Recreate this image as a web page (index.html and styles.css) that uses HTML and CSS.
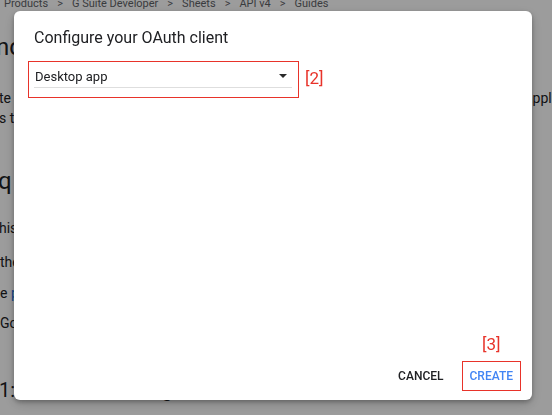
FILE: index.html
```html
<!DOCTYPE html>
<html lang="en">
<head>
<meta charset="utf-8">
<title>Configure your OAuth client</title>
<link rel="stylesheet" href="styles.css">
</head>
<body>
<div class="page">
  <nav class="crumbs">
    <span>Products</span><span class="sep">&gt;</span>
    <span>G Suite Developer</span><span class="sep">&gt;</span>
    <span>Sheets</span><span class="sep">&gt;</span>
    <span>API v4</span><span class="sep">&gt;</span>
    <span>Guides</span>
  </nav>
  <h1 class="h-title">nc</h1>
  <div class="p-row r-first"><span class="p-left">te t</span><span class="p-right">application</span></div>
  <div class="p-row"><span class="p-left">s to</span></div>
  <h2 class="h-sec">q</h2>
  <p class="p r-his">his</p>
  <p class="p r-th">the</p>
  <p class="p r-ep">e <a class="link">p</a></p>
  <p class="p r-go">Go</p>
  <h3 class="h-step">1: Turn on the Google Sheets API</h3>
</div>
<div class="scrim"></div>

<div class="dialog" role="dialog">
  <h2 class="d-title">Configure your OAuth client</h2>
  <div class="field-row">
    <div class="mark mark-field">
      <div class="select">
        <span class="select-value">Desktop app</span>
        <span class="select-arrow"></span>
      </div>
    </div>
    <span class="mark-label label-2">[2]</span>
  </div>
  <div class="actions">
    <button class="btn btn-cancel">CANCEL</button>
    <div class="create-col">
      <span class="mark-label label-3">[3]</span>
      <div class="mark mark-btn">
        <button class="btn btn-create">CREATE</button>
      </div>
    </div>
  </div>
</div>
</body>
</html>
```

FILE: styles.css
```css
html, body {
  margin: 0;
  padding: 0;
  width: 552px;
  height: 415px;
  overflow: hidden;
  background: #ffffff;
  font-family: Roboto, "Liberation Sans", Arial, sans-serif;
  color: #202124;
}

.page {
  display: flex;
  flex-direction: column;
  margin-top: -3px;
}

.crumbs {
  display: flex;
  gap: 9px;
  padding-left: 4px;
  font-size: 11px;
  line-height: 14px;
  color: #5f6368;
  white-space: nowrap;
}

.h-title {
  margin: 20px 0 0 -4px;
  font-size: 24px;
  line-height: 32px;
  font-weight: 400;
}

.p-row {
  display: flex;
  font-size: 14px;
  line-height: 20px;
  white-space: nowrap;
}

.r-first { margin-top: 25px; }

.p-left {
  width: 526px;
  flex: none;
  margin-left: -1px;
}

.p-right { flex: none; }

.h-sec {
  margin: 37px 0 0 -2px;
  font-size: 24px;
  line-height: 32px;
  font-weight: 400;
}

.p {
  margin: 0;
  font-size: 14px;
  line-height: 20px;
  white-space: nowrap;
}

.r-his { margin: 21px 0 0 -1px; }
.r-th { margin-top: 14px; }
.r-ep { margin-top: 11px; }
.r-go { margin-top: 10px; }

.link { color: #1a73e8; }

.h-step {
  margin: 43px 0 0 -1px;
  font-size: 20px;
  line-height: 28px;
  font-weight: 400;
  white-space: nowrap;
}

.scrim {
  position: fixed;
  inset: 0;
  background: rgba(0, 0, 0, 0.39);
}

.dialog {
  position: fixed;
  left: 14px;
  top: 11px;
  width: 518px;
  height: 389px;
  box-sizing: border-box;
  padding: 15px 11px 9px 20px;
  background: #ffffff;
  border-radius: 6px;
  box-shadow: 0 2px 4px rgba(0, 0, 0, 0.25), 0 4px 12px rgba(0, 0, 0, 0.18);
  display: flex;
  flex-direction: column;
}

.d-title {
  margin: 0;
  font-size: 16px;
  line-height: 24px;
  font-weight: 400;
  color: #202124;
}

.field-row {
  display: flex;
  align-items: flex-start;
  margin: 11px 0 0 -6px;
}

.mark {
  border: 1px solid #e8332a;
}

.mark-field {
  width: 258px;
  padding: 7px 6px 9px 5px;
}

.select {
  display: flex;
  align-items: center;
  padding-bottom: 2px;
  border-bottom: 1px solid #dedede;
}

.select-value {
  flex: 1;
  padding-left: 1px;
  font-size: 13px;
  line-height: 16px;
  color: #202124;
}

.select-arrow {
  width: 0;
  height: 0;
  margin: 0 5px 2px 0;
  border-left: 4.5px solid transparent;
  border-right: 4.5px solid transparent;
  border-top: 4.5px solid #2a2a2a;
}

.mark-label {
  font-size: 17px;
  line-height: 20px;
  color: #e8332a;
}

.label-2 {
  margin: 7px 0 0 6px;
}

.actions {
  margin-top: auto;
  display: flex;
  justify-content: flex-end;
  align-items: flex-end;
}

.btn {
  font-family: Roboto, "Liberation Sans", Arial, sans-serif;
  font-size: 12px;
  line-height: 16px;
  font-weight: 500;
  background: transparent;
  border: 0;
  padding: 6px 7px;
  margin: 0;
  cursor: pointer;
}

.btn-cancel {
  color: #202124;
  padding: 6px 8px;
  margin: 0 10px 1px 0;
}

.btn-create {
  color: #4285f4;
  display: block;
}

.create-col {
  display: flex;
  flex-direction: column;
  align-items: center;
}

.label-3 {
  margin-bottom: 7px;
}
```
